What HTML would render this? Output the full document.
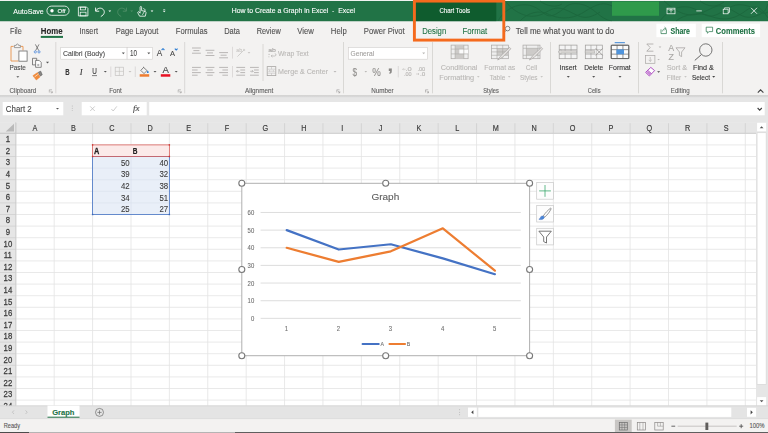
<!DOCTYPE html>
<html lang="en"><head><meta charset="utf-8"><title>How to Create a Graph in Excel - Excel</title>
<style>
html,body{margin:0;padding:0;background:#f3f2f1;}
body{width:768px;height:433px;overflow:hidden;position:relative;font-family:"Liberation Sans",sans-serif;}
svg{display:block;position:absolute;left:-4px;top:-4px;filter:blur(0.35px);font-family:"Liberation Sans",sans-serif;}
text{white-space:pre;}
</style></head><body>
<svg width="776" height="441" viewBox="-4 -4 776 441">
<g id="titlebar">
<rect x="-5.00" y="-5.00" width="778.00" height="6.10" fill="#f0f3f1"/>
<rect x="-5.00" y="1.00" width="778.00" height="20.50" fill="#217346"/>
<g fill="none" stroke="#1a6139" stroke-width="0.9" opacity="0.65">
<path d="M498 21C505 8 520 2 532 6S545 20 556 14S566 2 580 4S600 20 612 21"/>
<path d="M505 1C512 10 524 18 536 16S552 4 566 10S584 22 600 12"/>
<path d="M520 21C528 12 540 10 548 14S570 21 584 12S604 2 612 6"/>
<path d="M660 21C668 10 680 4 692 8S706 20 718 14S734 2 748 6S762 16 768 12"/>
<path d="M664 1C672 8 684 18 698 14S716 2 728 8S744 20 756 16S766 6 768 4"/>
<path d="M676 21C684 14 700 12 710 16S732 21 744 12S760 6 768 18"/>
<path d="M540 1C546 6 556 8 562 4"/>
<path d="M700 1C708 7 716 8 724 2"/>
</g>
<rect x="415.80" y="1.00" width="80.50" height="20.30" fill="#0f5c2e"/>
<rect x="612.00" y="1.50" width="47.00" height="14.30" fill="#2f9a4b"/>
<text x="13.30" y="13.52" font-size="7" fill="#fff" textLength="30.40" lengthAdjust="spacingAndGlyphs" stroke="#fff" stroke-width="0.1">AutoSave</text>
<rect x="46.90" y="6.10" width="22.20" height="9.20" fill="none" stroke="#fff" stroke-width="0.8" rx="4.6"/>
<circle cx="52.00" cy="10.70" r="1.70" fill="#fff"/>
<text x="57.50" y="12.82" font-size="5.6" fill="#fff" textLength="8.00" lengthAdjust="spacingAndGlyphs" stroke="#fff" stroke-width="0.1">Off</text>
<path d="M78.4 7.1h8.2l1.3 1.3v7.5h-9.5z" fill="none" stroke="#fff" stroke-width="0.8" />
<rect x="80.40" y="7.10" width="5.00" height="2.80" fill="none" stroke="#fff" stroke-width="0.7"/>
<rect x="80.20" y="12.20" width="5.80" height="3.70" fill="none" stroke="#fff" stroke-width="0.7"/>
<path d="M95.6 7.6v3.6h3.6M95.8 11c1.2-2.6 4.4-3.6 6.6-2.2s2.6 4.2 0.6 6.2l-2.2 1.6" fill="none" stroke="#fff" stroke-width="0.9" />
<path d="M108.40 10.45h2.8l-1.40 1.5z" fill="#fff" />
<path d="M126.4 7.6v3.6h-3.6M126.2 11c-1.2-2.6-4.4-3.6-6.6-2.2s-2.6 4.2-0.6 6.2l2.2 1.6" fill="none" stroke="#4f8f68" stroke-width="0.9" />
<path d="M130.30 10.45h2.8l-1.40 1.5z" fill="#4f8f68" />
<path d="M139.6 16.2l-1.8-3.4c-.4-.9.8-1.5 1.4-.7l.9 1.1v-6c0-1 1.5-1 1.5 0v3.4l3.3.7c.9.2 1.3.8 1.1 1.7l-.7 3.2z" fill="none" stroke="#fff" stroke-width="0.8" />
<path d="M143.2 8.4l2.2 1.4-3 5" fill="none" stroke="#fff" stroke-width="0.7" />
<path d="M150.60 10.45h2.8l-1.40 1.5z" fill="#fff" />
<line x1="163.20" y1="9.60" x2="165.20" y2="9.60" stroke="#fff" stroke-width="0.6"/>
<path d="M162.80 10.75h2.8l-1.40 1.5z" fill="#fff" />
<text x="231.70" y="13.38" font-size="6.9" fill="#fff" textLength="123.30" lengthAdjust="spacingAndGlyphs" stroke="#fff" stroke-width="0.1">How to Create a Graph in Excel  -  Excel</text>
<text x="439.50" y="12.67" font-size="6.3" fill="#fff" textLength="30.50" lengthAdjust="spacingAndGlyphs" stroke="#fff" stroke-width="0.1">Chart Tools</text>
<rect x="667.00" y="8.20" width="8.00" height="5.60" fill="none" stroke="#fff" stroke-width="0.7"/>
<path d="M671 12.6v-3M669.6 10.8l1.4-1.4 1.4 1.4" fill="none" stroke="#fff" stroke-width="0.7" />
<line x1="667.00" y1="9.60" x2="675.00" y2="9.60" stroke="#fff" stroke-width="0.5"/>
<line x1="696.30" y1="10.90" x2="701.80" y2="10.90" stroke="#fff" stroke-width="0.8"/>
<rect x="723.20" y="9.20" width="4.90" height="4.60" fill="none" stroke="#fff" stroke-width="0.7"/>
<path d="M724.6 9.2v-1.4h4.9v4.6h-1.4" fill="none" stroke="#fff" stroke-width="0.7" />
<path d="M751 7.8l6 6M757 7.8l-6 6" fill="none" stroke="#fff" stroke-width="0.8" />
</g>
<g id="tabs">
<rect x="-5.00" y="21.50" width="778.00" height="19.00" fill="#f3f2f1"/>
<text x="10.00" y="33.89" font-size="8.3" fill="#505050" textLength="11.70" lengthAdjust="spacingAndGlyphs" stroke="#505050" stroke-width="0.1">File</text>
<text x="79.50" y="33.89" font-size="8.3" fill="#505050" textLength="18.50" lengthAdjust="spacingAndGlyphs" stroke="#505050" stroke-width="0.1">Insert</text>
<text x="115.80" y="33.89" font-size="8.3" fill="#505050" textLength="42.50" lengthAdjust="spacingAndGlyphs" stroke="#505050" stroke-width="0.1">Page Layout</text>
<text x="175.80" y="33.89" font-size="8.3" fill="#505050" textLength="31.70" lengthAdjust="spacingAndGlyphs" stroke="#505050" stroke-width="0.1">Formulas</text>
<text x="224.20" y="33.89" font-size="8.3" fill="#505050" textLength="15.80" lengthAdjust="spacingAndGlyphs" stroke="#505050" stroke-width="0.1">Data</text>
<text x="256.70" y="33.89" font-size="8.3" fill="#505050" textLength="24.10" lengthAdjust="spacingAndGlyphs" stroke="#505050" stroke-width="0.1">Review</text>
<text x="297.20" y="33.89" font-size="8.3" fill="#505050" textLength="16.60" lengthAdjust="spacingAndGlyphs" stroke="#505050" stroke-width="0.1">View</text>
<text x="330.80" y="33.89" font-size="8.3" fill="#505050" textLength="15.90" lengthAdjust="spacingAndGlyphs" stroke="#505050" stroke-width="0.1">Help</text>
<text x="363.80" y="33.89" font-size="8.3" fill="#505050" textLength="40.90" lengthAdjust="spacingAndGlyphs" stroke="#505050" stroke-width="0.1">Power Pivot</text>
<text x="40.80" y="33.89" font-size="8.3" fill="#262626" textLength="21.70" lengthAdjust="spacingAndGlyphs" font-weight="bold" stroke="#262626" stroke-width="0.1">Home</text>
<rect x="40.80" y="35.90" width="22.20" height="2.00" fill="#217346"/>
<text x="422.20" y="33.92" font-size="8.4" fill="#217346" textLength="24.00" lengthAdjust="spacingAndGlyphs" stroke="#217346" stroke-width="0.1">Design</text>
<text x="462.50" y="33.92" font-size="8.4" fill="#217346" textLength="24.70" lengthAdjust="spacingAndGlyphs" stroke="#217346" stroke-width="0.1">Format</text>
<circle cx="507.60" cy="28.60" r="2.30" fill="none" stroke="#555" stroke-width="0.7"/>
<line x1="506.00" y1="30.40" x2="504.60" y2="32.00" stroke="#555" stroke-width="0.7"/>
<text x="515.80" y="33.89" font-size="8.3" fill="#484848" textLength="98.40" lengthAdjust="spacingAndGlyphs" stroke="#484848" stroke-width="0.1">Tell me what you want to do</text>
<rect x="656.40" y="23.70" width="39.40" height="13.50" fill="#fff"/>
<path d="M661 29.4v4.2h5.4v-4.2M662.6 31.4c.2-1.8 1.2-2.8 3-2.8M664.6 27.2l1.6 1.4-1.6 1.4" fill="none" stroke="#217346" stroke-width="0.7" />
<text x="670.50" y="33.75" font-size="8.2" fill="#217346" textLength="19.50" lengthAdjust="spacingAndGlyphs" font-weight="bold" stroke="#217346" stroke-width="0.1">Share</text>
<rect x="701.70" y="23.70" width="58.40" height="13.50" fill="#fff"/>
<path d="M706.2 27.2h6.4v4.4h-3.6l-1.6 1.6v-1.6h-1.2z" fill="none" stroke="#217346" stroke-width="0.7" />
<text x="715.80" y="33.75" font-size="8.2" fill="#217346" textLength="39.20" lengthAdjust="spacingAndGlyphs" font-weight="bold" stroke="#217346" stroke-width="0.1">Comments</text>
</g>
<g id="ribbon">
<rect x="-5.00" y="40.30" width="778.00" height="55.00" fill="#f3f2f1"/>
<line x1="55.80" y1="42.00" x2="55.80" y2="93.30" stroke="#d2d0ce" stroke-width="0.8"/>
<line x1="184.70" y1="42.00" x2="184.70" y2="93.30" stroke="#d2d0ce" stroke-width="0.8"/>
<line x1="343.50" y1="42.00" x2="343.50" y2="93.30" stroke="#d2d0ce" stroke-width="0.8"/>
<line x1="432.50" y1="42.00" x2="432.50" y2="93.30" stroke="#d2d0ce" stroke-width="0.8"/>
<line x1="550.50" y1="42.00" x2="550.50" y2="93.30" stroke="#d2d0ce" stroke-width="0.8"/>
<line x1="638.50" y1="42.00" x2="638.50" y2="93.30" stroke="#d2d0ce" stroke-width="0.8"/>
<line x1="722.50" y1="42.00" x2="722.50" y2="93.30" stroke="#d2d0ce" stroke-width="0.8"/>
<path d="M13.6 46.4h-2.6v14.6h7.4" fill="none" stroke="#e8914a" stroke-width="0.9" />
<path d="M20.4 46.4h2.6v4" fill="none" stroke="#e8914a" stroke-width="0.9" />
<path d="M14.4 47.6v-2.2h1.8c0-1.9 2.4-1.9 2.4 0h1.8v2.2z" fill="#f3f2f1" stroke="#7a7a7a" stroke-width="0.7" />
<rect x="18.90" y="51.00" width="8.20" height="10.20" fill="#fff" stroke="#6a6a6a" stroke-width="0.8"/>
<text x="9.50" y="70.48" font-size="6.9" fill="#484848" textLength="16.30" lengthAdjust="spacingAndGlyphs" stroke="#484848" stroke-width="0.1">Paste</text>
<path d="M16.30 76.20h3.0l-1.50 1.6z" fill="#555" />
<path d="M35.4 44.4l3.4 6.2M39 44.4l-3.4 6.2" fill="none" stroke="#555" stroke-width="0.7" />
<circle cx="35.30" cy="51.90" r="1.10" fill="none" stroke="#3b7dd8" stroke-width="0.7"/>
<circle cx="39.00" cy="51.90" r="1.10" fill="none" stroke="#3b7dd8" stroke-width="0.7"/>
<path d="M32.5 58.3h4.2v6.6h-4.2z" fill="#f3f2f1" stroke="#555" stroke-width="0.7" />
<path d="M35.6 60.4h3.6l2 2v4.9h-5.6z" fill="#fff" stroke="#555" stroke-width="0.7" />
<path d="M37.6 64.4h1.4v1.2h-1.4z" fill="none" stroke="#555" stroke-width="0.4" />
<path d="M46.00 61.80h3.0l-1.50 1.6z" fill="#555" />
<path d="M32.9 75.7l4.600-3.100 2.500 4.300-3.700 3.100z" fill="#f08c3c" stroke="#ee7d2a" stroke-width="0.5" />
<path d="M34.600 76.900l3.800-2.800" fill="none" stroke="#fff" stroke-width="0.6" />
<path d="M38.300 72.300l2.400-1.100 1.500 3.600-1.800 1.200z" fill="#8a8886" stroke="#555" stroke-width="0.6" />
<text x="9.50" y="93.38" font-size="6.6" fill="#5c5c5c" textLength="26.70" lengthAdjust="spacingAndGlyphs" stroke="#5c5c5c" stroke-width="0.1">Clipboard</text>
<path d="M49.50 90.00h-0.01M49.30 92.50v-2.7h2.7" fill="none" stroke="#8a8886" stroke-width="0.5" />
<path d="M52.30 92.80h-1.6M52.30 92.80v-1.6M52.30 92.80l-2-2" fill="none" stroke="#8a8886" stroke-width="0.5" />
<rect x="60.70" y="47.40" width="66.40" height="11.80" fill="#fff" stroke="#d0cecc" stroke-width="0.6"/>
<rect x="127.10" y="47.40" width="25.40" height="11.80" fill="#fff" stroke="#d0cecc" stroke-width="0.6"/>
<text x="63.00" y="56.29" font-size="7.6" fill="#484848" textLength="42.00" lengthAdjust="spacingAndGlyphs" stroke="#484848" stroke-width="0.1">Calibri (Body)</text>
<path d="M121.80 52.60h3.0l-1.50 1.6z" fill="#555" />
<text x="130.00" y="56.42" font-size="8.4" fill="#484848" textLength="7.00" lengthAdjust="spacingAndGlyphs" stroke="#484848" stroke-width="0.1">10</text>
<path d="M147.30 52.60h3.0l-1.50 1.6z" fill="#555" />
<text x="156.70" y="56.07" font-size="8.8" fill="#484848" textLength="5.50" lengthAdjust="spacingAndGlyphs" stroke="#484848" stroke-width="0.1">A</text>
<path d="M161.6 50l1.4-1.3 1.4 1.3" fill="none" stroke="#2b7cd3" stroke-width="1.1" />
<text x="170.00" y="56.11" font-size="7.8" fill="#484848" textLength="5.00" lengthAdjust="spacingAndGlyphs" stroke="#484848" stroke-width="0.1">A</text>
<path d="M174.8 48.6l1.4 1.3 1.4-1.3" fill="none" stroke="#2b7cd3" stroke-width="1.1" />
<text x="65.30" y="74.54" font-size="9" fill="#333" textLength="4.40" lengthAdjust="spacingAndGlyphs" font-weight="bold" stroke="#333" stroke-width="0.1">B</text>
<text x="79.80" y="74.54" font-size="9" fill="#333" textLength="2.80" lengthAdjust="spacingAndGlyphs" font-style="italic" font-family="'Liberation Serif',serif" stroke="#333" stroke-width="0.1">I</text>
<text x="92.20" y="73.62" font-size="8.4" fill="#333" textLength="4.60" lengthAdjust="spacingAndGlyphs" stroke="#333" stroke-width="0.1">U</text>
<line x1="92.00" y1="75.60" x2="97.00" y2="75.60" stroke="#333" stroke-width="0.6"/>
<path d="M103.80 71.00h3.0l-1.50 1.6z" fill="#555" />
<line x1="110.80" y1="66.50" x2="110.80" y2="77.00" stroke="#d2d0ce" stroke-width="0.7"/>
<rect x="115.20" y="67.20" width="8.40" height="8.40" fill="none" stroke="#c4c2c0" stroke-width="0.7"/>
<line x1="119.40" y1="67.20" x2="119.40" y2="75.60" stroke="#c4c2c0" stroke-width="0.6"/>
<line x1="115.20" y1="71.40" x2="123.60" y2="71.40" stroke="#c4c2c0" stroke-width="0.6"/>
<path d="M128.50 71.00h3.0l-1.50 1.6z" fill="#c4c2c0" />
<line x1="135.30" y1="66.50" x2="135.30" y2="77.00" stroke="#d2d0ce" stroke-width="0.7"/>
<path d="M143.6 67.4l3.4 3.2-3 3-3.2-3.2z" fill="none" stroke="#555" stroke-width="0.7" />
<path d="M143.2 67l.9.9" fill="none" stroke="#555" stroke-width="0.7" />
<path d="M147.8 70.4c.6.9.9 1.4.9 1.8a.9.9 0 0 1-1.8 0c0-.4.3-.9.9-1.8z" fill="#2b7cd3" />
<rect x="139.70" y="74.20" width="9.50" height="2.50" fill="#ed7d31"/>
<path d="M153.50 71.00h3.0l-1.50 1.6z" fill="#555" />
<text x="162.40" y="72.88" font-size="9.4" fill="#444" textLength="6.40" lengthAdjust="spacingAndGlyphs" stroke="#444" stroke-width="0.1">A</text>
<rect x="160.80" y="74.20" width="9.50" height="2.50" fill="#e81123"/>
<path d="M174.70 71.00h3.0l-1.50 1.6z" fill="#555" />
<text x="109.20" y="93.38" font-size="6.6" fill="#5c5c5c" textLength="12.50" lengthAdjust="spacingAndGlyphs" stroke="#5c5c5c" stroke-width="0.1">Font</text>
<path d="M178.40 90.00h-0.01M178.20 92.50v-2.7h2.7" fill="none" stroke="#8a8886" stroke-width="0.5" />
<path d="M181.20 92.80h-1.6M181.20 92.80v-1.6M181.20 92.80l-2-2" fill="none" stroke="#8a8886" stroke-width="0.5" />
<line x1="192.00" y1="48.00" x2="200.80" y2="48.00" stroke="#a09e9c" stroke-width="0.7"/>
<line x1="193.40" y1="50.60" x2="199.40" y2="50.60" stroke="#a09e9c" stroke-width="0.7"/>
<line x1="192.00" y1="53.20" x2="200.80" y2="53.20" stroke="#a09e9c" stroke-width="0.7"/>
<line x1="205.60" y1="50.30" x2="214.40" y2="50.30" stroke="#a09e9c" stroke-width="0.7"/>
<line x1="207.00" y1="52.90" x2="213.00" y2="52.90" stroke="#a09e9c" stroke-width="0.7"/>
<line x1="205.60" y1="55.50" x2="214.40" y2="55.50" stroke="#a09e9c" stroke-width="0.7"/>
<line x1="219.20" y1="52.60" x2="228.00" y2="52.60" stroke="#a09e9c" stroke-width="0.7"/>
<line x1="220.60" y1="55.20" x2="226.60" y2="55.20" stroke="#a09e9c" stroke-width="0.7"/>
<line x1="219.20" y1="57.80" x2="228.00" y2="57.80" stroke="#a09e9c" stroke-width="0.7"/>
<line x1="192.00" y1="67.40" x2="200.80" y2="67.40" stroke="#a09e9c" stroke-width="0.7"/>
<line x1="192.00" y1="70.00" x2="197.60" y2="70.00" stroke="#a09e9c" stroke-width="0.7"/>
<line x1="192.00" y1="72.60" x2="200.80" y2="72.60" stroke="#a09e9c" stroke-width="0.7"/>
<line x1="192.00" y1="75.20" x2="197.60" y2="75.20" stroke="#a09e9c" stroke-width="0.7"/>
<line x1="205.60" y1="67.40" x2="214.40" y2="67.40" stroke="#a09e9c" stroke-width="0.7"/>
<line x1="207.20" y1="70.00" x2="212.80" y2="70.00" stroke="#a09e9c" stroke-width="0.7"/>
<line x1="205.60" y1="72.60" x2="214.40" y2="72.60" stroke="#a09e9c" stroke-width="0.7"/>
<line x1="207.20" y1="75.20" x2="212.80" y2="75.20" stroke="#a09e9c" stroke-width="0.7"/>
<line x1="219.20" y1="67.40" x2="228.00" y2="67.40" stroke="#a09e9c" stroke-width="0.7"/>
<line x1="222.40" y1="70.00" x2="228.00" y2="70.00" stroke="#a09e9c" stroke-width="0.7"/>
<line x1="219.20" y1="72.60" x2="228.00" y2="72.60" stroke="#a09e9c" stroke-width="0.7"/>
<line x1="222.40" y1="75.20" x2="228.00" y2="75.20" stroke="#a09e9c" stroke-width="0.7"/>
<line x1="232.50" y1="46.80" x2="232.50" y2="58.60" stroke="#d2d0ce" stroke-width="0.7"/>
<line x1="232.50" y1="66.00" x2="232.50" y2="77.40" stroke="#d2d0ce" stroke-width="0.7"/>
<g opacity="0.75">
<path d="M237.4 56.6l6.6-6.6" fill="none" stroke="#b9b7b5" stroke-width="0.8" />
<path d="M243 49.4h1.6v1.6" fill="none" stroke="#b9b7b5" stroke-width="0.7" />
<text x="236.30" y="52.20" font-size="5" fill="#b9b7b5" textLength="5.70" lengthAdjust="spacingAndGlyphs" stroke="#b9b7b5" stroke-width="0.1">ab</text>
</g>
<path d="M247.70 52.20h2.6l-1.30 1.4z" fill="#b9b7b5" />
<line x1="236.30" y1="67.40" x2="245.10" y2="67.40" stroke="#a09e9c" stroke-width="0.7"/>
<line x1="236.30" y1="75.20" x2="245.10" y2="75.20" stroke="#a09e9c" stroke-width="0.7"/>
<line x1="240.30" y1="70.00" x2="245.10" y2="70.00" stroke="#a09e9c" stroke-width="0.7"/>
<line x1="240.30" y1="72.60" x2="245.10" y2="72.60" stroke="#a09e9c" stroke-width="0.7"/>
<path d="M239.50 71.3h-3M237.70 70.1l-1.2 1.2 1.2 1.2" fill="none" stroke="#a09e9c" stroke-width="0.6" />
<line x1="250.00" y1="67.40" x2="258.80" y2="67.40" stroke="#a09e9c" stroke-width="0.7"/>
<line x1="250.00" y1="75.20" x2="258.80" y2="75.20" stroke="#a09e9c" stroke-width="0.7"/>
<line x1="254.00" y1="70.00" x2="258.80" y2="70.00" stroke="#a09e9c" stroke-width="0.7"/>
<line x1="254.00" y1="72.60" x2="258.80" y2="72.60" stroke="#a09e9c" stroke-width="0.7"/>
<path d="M250.20 71.3h3M252.00 70.1l1.2 1.2-1.2 1.2" fill="none" stroke="#a09e9c" stroke-width="0.6" />
<line x1="263.00" y1="44.00" x2="263.00" y2="81.00" stroke="#d2d0ce" stroke-width="0.8"/>
<text x="268.20" y="52.23" font-size="6.2" fill="#a8a6a4" textLength="7.80" lengthAdjust="spacingAndGlyphs" stroke="#a8a6a4" stroke-width="0.1">ab</text>
<path d="M268.4 54.400h1.4M268.4 56.8h1M271.2 56h3.6c1.600 0 1.600-2.400 0-2.400M272.400 54.800l-1.200 1.200 1.200 1.200" fill="none" stroke="#a8a6a4" stroke-width="0.6" />
<text x="278.00" y="56.04" font-size="7.6" fill="#b9b7b5" textLength="30.70" lengthAdjust="spacingAndGlyphs" stroke="#b9b7b5" stroke-width="0.1">Wrap Text</text>
<rect x="267.20" y="66.60" width="8.60" height="9.00" fill="none" stroke="#a8a6a4" stroke-width="0.8"/>
<path d="M267.2 69.2h8.6M267.2 73.2h8.6M271.5 66.6v2.6M271.5 73.2v2.4M268.8 71.2h5.4M269.8 70.2l-1 1 1 1M273.2 70.2l1 1-1 1" fill="none" stroke="#b9b7b5" stroke-width="0.5" />
<text x="278.00" y="73.94" font-size="7.6" fill="#b9b7b5" textLength="50.00" lengthAdjust="spacingAndGlyphs" stroke="#b9b7b5" stroke-width="0.1">Merge &amp; Center</text>
<path d="M333.50 71.00h3.0l-1.50 1.6z" fill="#b9b7b5" />
<text x="245.00" y="93.38" font-size="6.6" fill="#5c5c5c" textLength="28.30" lengthAdjust="spacingAndGlyphs" stroke="#5c5c5c" stroke-width="0.1">Alignment</text>
<path d="M337.00 90.00h-0.01M336.80 92.50v-2.7h2.7" fill="none" stroke="#8a8886" stroke-width="0.5" />
<path d="M339.80 92.80h-1.6M339.80 92.80v-1.6M339.80 92.80l-2-2" fill="none" stroke="#8a8886" stroke-width="0.5" />
<rect x="348.30" y="47.40" width="79.20" height="11.80" fill="#fff" stroke="#d0cecc" stroke-width="0.6"/>
<text x="350.50" y="56.29" font-size="7.6" fill="#a19f9d" textLength="23.70" lengthAdjust="spacingAndGlyphs" stroke="#a19f9d" stroke-width="0.1">General</text>
<path d="M422.20 52.60h3.0l-1.50 1.6z" fill="#b9b7b5" />
<text x="352.60" y="76.16" font-size="11" fill="#8f8d8b" textLength="4.60" lengthAdjust="spacingAndGlyphs" stroke="#8f8d8b" stroke-width="0.1">$</text>
<path d="M364.50 71.10h2.6l-1.30 1.4z" fill="#b9b7b5" />
<text x="372.20" y="75.90" font-size="11.4" fill="#8f8d8b" textLength="8.60" lengthAdjust="spacingAndGlyphs" stroke="#8f8d8b" stroke-width="0.1">%</text>
<text x="387.40" y="70.52" font-size="17" fill="#8a8886" textLength="5.60" lengthAdjust="spacingAndGlyphs" font-weight="bold" stroke="#8a8886" stroke-width="0.1">,</text>
<line x1="398.30" y1="66.00" x2="398.30" y2="77.40" stroke="#d2d0ce" stroke-width="0.7"/>
<text x="405.40" y="71.26" font-size="4.6" fill="#b9b7b5" textLength="6.30" lengthAdjust="spacingAndGlyphs" stroke="#b9b7b5" stroke-width="0.1">.0</text>
<text x="404.00" y="75.86" font-size="4.6" fill="#b9b7b5" textLength="7.70" lengthAdjust="spacingAndGlyphs" stroke="#b9b7b5" stroke-width="0.1">.00</text>
<path d="M402.6 69.3h3M403.6 68.3l-1 1 1 1" fill="none" stroke="#b9b7b5" stroke-width="0.5" />
<text x="417.40" y="71.26" font-size="4.6" fill="#b9b7b5" textLength="7.90" lengthAdjust="spacingAndGlyphs" stroke="#b9b7b5" stroke-width="0.1">.00</text>
<text x="420.00" y="75.86" font-size="4.6" fill="#b9b7b5" textLength="5.30" lengthAdjust="spacingAndGlyphs" stroke="#b9b7b5" stroke-width="0.1">.0</text>
<path d="M416 74h3M418 73l1 1-1 1" fill="none" stroke="#b9b7b5" stroke-width="0.5" />
<text x="371.30" y="93.38" font-size="6.6" fill="#5c5c5c" textLength="22.40" lengthAdjust="spacingAndGlyphs" stroke="#5c5c5c" stroke-width="0.1">Number</text>
<path d="M425.70 90.00h-0.01M425.50 92.50v-2.7h2.7" fill="none" stroke="#8a8886" stroke-width="0.5" />
<path d="M428.50 92.80h-1.6M428.50 92.80v-1.6M428.50 92.80l-2-2" fill="none" stroke="#8a8886" stroke-width="0.5" />
<rect x="451.10" y="45.10" width="17.00" height="13.60" fill="#efefef" stroke="#a9a7a5" stroke-width="0.7"/>
<rect x="455.10" y="45.10" width="8.70" height="4.00" fill="#cdcbc9"/>
<rect x="455.10" y="49.10" width="4.40" height="4.80" fill="#cdcbc9"/>
<rect x="459.50" y="49.10" width="8.60" height="4.80" fill="#fbfbfb"/>
<rect x="455.10" y="53.90" width="8.70" height="4.80" fill="#cdcbc9"/>
<line x1="455.10" y1="45.10" x2="455.10" y2="58.70" stroke="#a9a7a5" stroke-width="0.6"/>
<line x1="463.80" y1="45.10" x2="463.80" y2="58.70" stroke="#a9a7a5" stroke-width="0.6"/>
<line x1="451.10" y1="49.10" x2="468.10" y2="49.10" stroke="#a9a7a5" stroke-width="0.6"/>
<line x1="451.10" y1="53.90" x2="468.10" y2="53.90" stroke="#a9a7a5" stroke-width="0.6"/>
<text x="440.80" y="70.49" font-size="7.6" fill="#b9b7b5" textLength="36.70" lengthAdjust="spacingAndGlyphs" stroke="#b9b7b5" stroke-width="0.1">Conditional</text>
<text x="439.20" y="79.69" font-size="7.6" fill="#b9b7b5" textLength="35.00" lengthAdjust="spacingAndGlyphs" stroke="#b9b7b5" stroke-width="0.1">Formatting</text>
<path d="M477.00 76.20h2.6l-1.30 1.4z" fill="#b9b7b5" />
<rect x="491.40" y="45.10" width="17.00" height="13.60" fill="#efefef" stroke="#a9a7a5" stroke-width="0.7"/>
<rect x="497.00" y="48.50" width="11.40" height="6.80" fill="#cdcbc9"/>
<line x1="497.00" y1="45.10" x2="497.00" y2="58.70" stroke="#a9a7a5" stroke-width="0.6"/>
<line x1="502.70" y1="45.10" x2="502.70" y2="58.70" stroke="#a9a7a5" stroke-width="0.6"/>
<line x1="491.40" y1="48.50" x2="508.40" y2="48.50" stroke="#a9a7a5" stroke-width="0.6"/>
<line x1="491.40" y1="51.90" x2="508.40" y2="51.90" stroke="#a9a7a5" stroke-width="0.6"/>
<line x1="491.40" y1="55.30" x2="508.40" y2="55.30" stroke="#a9a7a5" stroke-width="0.6"/>
<path d="M509.60 47.40l-8.6 8.2-3.4 4.4 4.8-2.6 8.4-8.6z" fill="#e6e4e2" stroke="#a6a4a2" stroke-width="0.7" />
<text x="484.20" y="70.49" font-size="7.6" fill="#b9b7b5" textLength="31.10" lengthAdjust="spacingAndGlyphs" stroke="#b9b7b5" stroke-width="0.1">Format as</text>
<text x="489.70" y="79.69" font-size="7.6" fill="#b9b7b5" textLength="15.60" lengthAdjust="spacingAndGlyphs" stroke="#b9b7b5" stroke-width="0.1">Table</text>
<path d="M507.90 76.20h2.6l-1.30 1.4z" fill="#b9b7b5" />
<rect x="523.00" y="45.10" width="17.00" height="13.60" fill="#efefef" stroke="#a9a7a5" stroke-width="0.7"/>
<rect x="526.40" y="48.30" width="11.60" height="7.00" fill="#cdcbc9"/>
<line x1="526.40" y1="45.10" x2="526.40" y2="58.70" stroke="#a9a7a5" stroke-width="0.6"/>
<line x1="538.00" y1="45.10" x2="538.00" y2="58.70" stroke="#a9a7a5" stroke-width="0.6"/>
<line x1="523.00" y1="48.30" x2="540.00" y2="48.30" stroke="#a9a7a5" stroke-width="0.6"/>
<line x1="523.00" y1="55.30" x2="540.00" y2="55.30" stroke="#a9a7a5" stroke-width="0.6"/>
<path d="M541.40 47.40l-8.6 8.2-3.4 4.4 4.8-2.6 8.4-8.6z" fill="#e6e4e2" stroke="#a6a4a2" stroke-width="0.7" />
<text x="525.80" y="70.49" font-size="7.6" fill="#b9b7b5" textLength="11.40" lengthAdjust="spacingAndGlyphs" stroke="#b9b7b5" stroke-width="0.1">Cell</text>
<text x="520.00" y="79.69" font-size="7.6" fill="#b9b7b5" textLength="17.50" lengthAdjust="spacingAndGlyphs" stroke="#b9b7b5" stroke-width="0.1">Styles</text>
<path d="M540.40 76.20h2.6l-1.30 1.4z" fill="#b9b7b5" />
<text x="483.30" y="93.38" font-size="6.6" fill="#5c5c5c" textLength="15.50" lengthAdjust="spacingAndGlyphs" stroke="#5c5c5c" stroke-width="0.1">Styles</text>
<rect x="559.20" y="45.10" width="17.80" height="13.60" fill="#f4f4f4" stroke="#9c9a98" stroke-width="0.7"/>
<line x1="565.13" y1="45.10" x2="565.13" y2="58.70" stroke="#9c9a98" stroke-width="0.6"/>
<line x1="559.20" y1="49.63" x2="577.00" y2="49.63" stroke="#9c9a98" stroke-width="0.6"/>
<line x1="571.07" y1="45.10" x2="571.07" y2="58.70" stroke="#9c9a98" stroke-width="0.6"/>
<line x1="559.20" y1="54.17" x2="577.00" y2="54.17" stroke="#9c9a98" stroke-width="0.6"/>
<path d="M558.2 51.9l2.8-2.4v1.2h15.6v2.4h-15.6v1.2z" fill="#dddbd9" stroke="#9c9a98" stroke-width="0.5" />
<text x="559.50" y="70.49" font-size="7.6" fill="#333" textLength="17.20" lengthAdjust="spacingAndGlyphs" stroke="#333" stroke-width="0.1">Insert</text>
<path d="M566.80 76.10h3.0l-1.50 1.6z" fill="#555" />
<rect x="585.30" y="45.10" width="17.00" height="13.60" fill="#f4f4f4" stroke="#9c9a98" stroke-width="0.7"/>
<line x1="590.97" y1="45.10" x2="590.97" y2="58.70" stroke="#9c9a98" stroke-width="0.6"/>
<line x1="585.30" y1="49.63" x2="602.30" y2="49.63" stroke="#9c9a98" stroke-width="0.6"/>
<line x1="596.63" y1="45.10" x2="596.63" y2="58.70" stroke="#9c9a98" stroke-width="0.6"/>
<line x1="585.30" y1="54.17" x2="602.30" y2="54.17" stroke="#9c9a98" stroke-width="0.6"/>
<path d="M585.3 50.7h9.4v2.400h-9.4z" fill="#dddbd9" stroke="#9c9a98" stroke-width="0.5" />
<path d="M595.6 48.400l7 7M602.6 48.400l-7 7" fill="none" stroke="#9c9a98" stroke-width="0.7" />
<rect x="596.40" y="49.60" width="6.40" height="4.60" fill="#f3f2f1" opacity="0.55"/>
<path d="M596 48.800l6.400 6.300M602.400 48.800l-6.400 6.300" fill="none" stroke="#9c9a98" stroke-width="0.7" />
<text x="584.20" y="70.49" font-size="7.6" fill="#333" textLength="19.10" lengthAdjust="spacingAndGlyphs" stroke="#333" stroke-width="0.1">Delete</text>
<path d="M592.20 76.10h3.0l-1.50 1.6z" fill="#555" />
<rect x="611.20" y="45.20" width="17.60" height="13.40" fill="#fbfbfb" stroke="#666" stroke-width="0.7999999999999999"/>
<line x1="617.07" y1="45.20" x2="617.07" y2="58.60" stroke="#666" stroke-width="0.7"/>
<line x1="611.20" y1="49.67" x2="628.80" y2="49.67" stroke="#666" stroke-width="0.7"/>
<line x1="622.93" y1="45.20" x2="622.93" y2="58.60" stroke="#666" stroke-width="0.7"/>
<line x1="611.20" y1="54.13" x2="628.80" y2="54.13" stroke="#666" stroke-width="0.7"/>
<rect x="611.20" y="45.20" width="17.60" height="13.40" fill="none" stroke="#5a5a5a" stroke-width="0.8" rx="1.2"/>
<rect x="616.40" y="49.40" width="7.60" height="4.90" fill="#4f94dc"/>
<line x1="614.70" y1="42.70" x2="624.90" y2="42.70" stroke="#3b86d6" stroke-width="1"/>
<text x="608.80" y="70.49" font-size="7.6" fill="#333" textLength="22.00" lengthAdjust="spacingAndGlyphs" stroke="#333" stroke-width="0.1">Format</text>
<path d="M618.50 76.10h3.0l-1.50 1.6z" fill="#555" />
<text x="587.80" y="93.38" font-size="6.6" fill="#5c5c5c" textLength="12.70" lengthAdjust="spacingAndGlyphs" stroke="#5c5c5c" stroke-width="0.1">Cells</text>
<path d="M653.4 44h-6.6l3.4 3.6-3.4 3.6h6.6" fill="none" stroke="#a8a6a4" stroke-width="0.8" />
<path d="M658.70 46.50h2.6l-1.30 1.4z" fill="#b9b7b5" />
<rect x="645.50" y="55.50" width="9.40" height="7.80" fill="none" stroke="#a8a6a4" stroke-width="0.7"/>
<path d="M650.2 57v4.4M648.6 59.8l1.6 1.6 1.6-1.6" fill="none" stroke="#a8a6a4" stroke-width="0.6" />
<path d="M657.30 58.90h2.6l-1.30 1.4z" fill="#b9b7b5" />
<path d="M645.6 72.400l5.200-5 3.800 3.200-5.200 5.400z" fill="#fff" stroke="#a73fbd" stroke-width="0.9" />
<path d="M647.800 70.400l3.900 3.300" fill="none" stroke="#a73fbd" stroke-width="0.8" />
<path d="M646.200 72.400l1.900-1.700 3.300 2.900-1.800 1.800z" fill="#c98ad6" />
<path d="M657.10 71.20h3.0l-1.50 1.6z" fill="#444" />
<text x="668.30" y="50.96" font-size="9.6" fill="#a8a6a4" textLength="5.90" lengthAdjust="spacingAndGlyphs" stroke="#a8a6a4" stroke-width="0.1">A</text>
<text x="668.60" y="59.56" font-size="9.6" fill="#a8a6a4" textLength="5.40" lengthAdjust="spacingAndGlyphs" stroke="#a8a6a4" stroke-width="0.1">Z</text>
<path d="M676 47.8h9l-3.4 4.2v4.6l-2.2-1.2v-3.4z" fill="none" stroke="#a8a6a4" stroke-width="0.8" />
<text x="666.70" y="70.49" font-size="7.6" fill="#b9b7b5" textLength="20.50" lengthAdjust="spacingAndGlyphs" stroke="#b9b7b5" stroke-width="0.1">Sort &amp;</text>
<text x="666.70" y="79.69" font-size="7.6" fill="#b9b7b5" textLength="14.60" lengthAdjust="spacingAndGlyphs" stroke="#b9b7b5" stroke-width="0.1">Filter</text>
<path d="M684.20 76.20h2.6l-1.30 1.4z" fill="#b9b7b5" />
<circle cx="705.80" cy="50.00" r="6.20" fill="none" stroke="#555" stroke-width="0.8"/>
<line x1="701.40" y1="54.60" x2="694.80" y2="60.40" stroke="#555" stroke-width="0.9"/>
<text x="693.00" y="70.49" font-size="7.6" fill="#333" textLength="20.80" lengthAdjust="spacingAndGlyphs" stroke="#333" stroke-width="0.1">Find &amp;</text>
<text x="692.00" y="79.69" font-size="7.6" fill="#333" textLength="18.00" lengthAdjust="spacingAndGlyphs" stroke="#333" stroke-width="0.1">Select</text>
<path d="M712.20 76.10h3.0l-1.50 1.6z" fill="#444" />
<text x="670.80" y="93.38" font-size="6.6" fill="#5c5c5c" textLength="18.90" lengthAdjust="spacingAndGlyphs" stroke="#5c5c5c" stroke-width="0.1">Editing</text>
<path d="M757.8 92.6l2.800-2.800 2.800 2.800" fill="none" stroke="#444" stroke-width="1.1" />
</g>
<rect x="414.40" y="1.1" width="89.4" height="39.0" fill="none" stroke="#f56a1d" stroke-width="2.9"/>
<g id="formulabar">
<defs><linearGradient id="sh" x1="0" y1="0" x2="0" y2="1"><stop offset="0" stop-color="#c9c9c9"/><stop offset="1" stop-color="#e6e6e6"/></linearGradient></defs>
<rect x="-5.00" y="97.00" width="778.00" height="25.20" fill="#e6e6e6"/>
<rect x="-5.00" y="95.20" width="778.00" height="2.60" fill="url(#sh)"/>
<rect x="2.70" y="102.00" width="60.60" height="13.30" fill="#fff"/>
<text x="5.80" y="112.07" font-size="8.8" fill="#484848" textLength="25.90" lengthAdjust="spacingAndGlyphs" stroke="#484848" stroke-width="0.1">Chart 2</text>
<path d="M56.00 108.00h3.0l-1.50 1.6z" fill="#555" />
<circle cx="72.20" cy="106.00" r="0.45" fill="#9a9a9a"/>
<circle cx="72.20" cy="108.30" r="0.45" fill="#9a9a9a"/>
<circle cx="72.20" cy="110.60" r="0.45" fill="#9a9a9a"/>
<rect x="81.70" y="102.00" width="65.00" height="13.30" fill="#fff"/>
<path d="M90.2 106.4l4.6 4.6M94.8 106.4l-4.6 4.6" fill="none" stroke="#b8b8b8" stroke-width="0.7" />
<path d="M111.4 109l1.8 2 3.6-4.6" fill="none" stroke="#b8b8b8" stroke-width="0.7" />
<text x="133.00" y="111.48" font-size="8" fill="#444" textLength="6.60" lengthAdjust="spacingAndGlyphs" font-style="italic" font-family="'Liberation Serif',serif" stroke="#444" stroke-width="0.1">fx</text>
<rect x="149.20" y="102.00" width="615.50" height="13.30" fill="#fff"/>
<path d="M757.6 108l2.1 2.1 2.1-2.1" fill="none" stroke="#444" stroke-width="1.15" />
</g>
<g id="grid">
<rect x="-5.00" y="122.20" width="778.00" height="283.60" fill="#e6e6e6"/>
<rect x="15.80" y="133.30" width="740.20" height="272.50" fill="#fff"/>
<path d="M14 123.8v7.8h-8.2z" fill="#b9b9b9" />
<line x1="15.80" y1="133.30" x2="15.80" y2="405.80" stroke="#e3e3e3" stroke-width="0.8"/>
<line x1="15.80" y1="123.20" x2="15.80" y2="133.30" stroke="#cfcfcf" stroke-width="0.8"/>
<line x1="54.20" y1="133.30" x2="54.20" y2="405.80" stroke="#e3e3e3" stroke-width="0.8"/>
<line x1="54.20" y1="123.20" x2="54.20" y2="133.30" stroke="#cfcfcf" stroke-width="0.8"/>
<line x1="92.59" y1="133.30" x2="92.59" y2="405.80" stroke="#e3e3e3" stroke-width="0.8"/>
<line x1="92.59" y1="123.20" x2="92.59" y2="133.30" stroke="#cfcfcf" stroke-width="0.8"/>
<line x1="130.99" y1="133.30" x2="130.99" y2="405.80" stroke="#e3e3e3" stroke-width="0.8"/>
<line x1="130.99" y1="123.20" x2="130.99" y2="133.30" stroke="#cfcfcf" stroke-width="0.8"/>
<line x1="169.38" y1="133.30" x2="169.38" y2="405.80" stroke="#e3e3e3" stroke-width="0.8"/>
<line x1="169.38" y1="123.20" x2="169.38" y2="133.30" stroke="#cfcfcf" stroke-width="0.8"/>
<line x1="207.78" y1="133.30" x2="207.78" y2="405.80" stroke="#e3e3e3" stroke-width="0.8"/>
<line x1="207.78" y1="123.20" x2="207.78" y2="133.30" stroke="#cfcfcf" stroke-width="0.8"/>
<line x1="246.17" y1="133.30" x2="246.17" y2="405.80" stroke="#e3e3e3" stroke-width="0.8"/>
<line x1="246.17" y1="123.20" x2="246.17" y2="133.30" stroke="#cfcfcf" stroke-width="0.8"/>
<line x1="284.57" y1="133.30" x2="284.57" y2="405.80" stroke="#e3e3e3" stroke-width="0.8"/>
<line x1="284.57" y1="123.20" x2="284.57" y2="133.30" stroke="#cfcfcf" stroke-width="0.8"/>
<line x1="322.96" y1="133.30" x2="322.96" y2="405.80" stroke="#e3e3e3" stroke-width="0.8"/>
<line x1="322.96" y1="123.20" x2="322.96" y2="133.30" stroke="#cfcfcf" stroke-width="0.8"/>
<line x1="361.36" y1="133.30" x2="361.36" y2="405.80" stroke="#e3e3e3" stroke-width="0.8"/>
<line x1="361.36" y1="123.20" x2="361.36" y2="133.30" stroke="#cfcfcf" stroke-width="0.8"/>
<line x1="399.75" y1="133.30" x2="399.75" y2="405.80" stroke="#e3e3e3" stroke-width="0.8"/>
<line x1="399.75" y1="123.20" x2="399.75" y2="133.30" stroke="#cfcfcf" stroke-width="0.8"/>
<line x1="438.15" y1="133.30" x2="438.15" y2="405.80" stroke="#e3e3e3" stroke-width="0.8"/>
<line x1="438.15" y1="123.20" x2="438.15" y2="133.30" stroke="#cfcfcf" stroke-width="0.8"/>
<line x1="476.54" y1="133.30" x2="476.54" y2="405.80" stroke="#e3e3e3" stroke-width="0.8"/>
<line x1="476.54" y1="123.20" x2="476.54" y2="133.30" stroke="#cfcfcf" stroke-width="0.8"/>
<line x1="514.94" y1="133.30" x2="514.94" y2="405.80" stroke="#e3e3e3" stroke-width="0.8"/>
<line x1="514.94" y1="123.20" x2="514.94" y2="133.30" stroke="#cfcfcf" stroke-width="0.8"/>
<line x1="553.33" y1="133.30" x2="553.33" y2="405.80" stroke="#e3e3e3" stroke-width="0.8"/>
<line x1="553.33" y1="123.20" x2="553.33" y2="133.30" stroke="#cfcfcf" stroke-width="0.8"/>
<line x1="591.73" y1="133.30" x2="591.73" y2="405.80" stroke="#e3e3e3" stroke-width="0.8"/>
<line x1="591.73" y1="123.20" x2="591.73" y2="133.30" stroke="#cfcfcf" stroke-width="0.8"/>
<line x1="630.12" y1="133.30" x2="630.12" y2="405.80" stroke="#e3e3e3" stroke-width="0.8"/>
<line x1="630.12" y1="123.20" x2="630.12" y2="133.30" stroke="#cfcfcf" stroke-width="0.8"/>
<line x1="668.51" y1="133.30" x2="668.51" y2="405.80" stroke="#e3e3e3" stroke-width="0.8"/>
<line x1="668.51" y1="123.20" x2="668.51" y2="133.30" stroke="#cfcfcf" stroke-width="0.8"/>
<line x1="706.91" y1="133.30" x2="706.91" y2="405.80" stroke="#e3e3e3" stroke-width="0.8"/>
<line x1="706.91" y1="123.20" x2="706.91" y2="133.30" stroke="#cfcfcf" stroke-width="0.8"/>
<line x1="745.31" y1="133.30" x2="745.31" y2="405.80" stroke="#e3e3e3" stroke-width="0.8"/>
<line x1="745.31" y1="123.20" x2="745.31" y2="133.30" stroke="#cfcfcf" stroke-width="0.8"/>
<line x1="15.80" y1="133.30" x2="756.00" y2="133.30" stroke="#e3e3e3" stroke-width="0.8"/>
<line x1="0.00" y1="133.30" x2="15.80" y2="133.30" stroke="#cfcfcf" stroke-width="0.8"/>
<line x1="15.80" y1="144.90" x2="756.00" y2="144.90" stroke="#e3e3e3" stroke-width="0.8"/>
<line x1="0.00" y1="144.90" x2="15.80" y2="144.90" stroke="#cfcfcf" stroke-width="0.8"/>
<line x1="15.80" y1="156.50" x2="756.00" y2="156.50" stroke="#e3e3e3" stroke-width="0.8"/>
<line x1="0.00" y1="156.50" x2="15.80" y2="156.50" stroke="#cfcfcf" stroke-width="0.8"/>
<line x1="15.80" y1="168.10" x2="756.00" y2="168.10" stroke="#e3e3e3" stroke-width="0.8"/>
<line x1="0.00" y1="168.10" x2="15.80" y2="168.10" stroke="#cfcfcf" stroke-width="0.8"/>
<line x1="15.80" y1="179.70" x2="756.00" y2="179.70" stroke="#e3e3e3" stroke-width="0.8"/>
<line x1="0.00" y1="179.70" x2="15.80" y2="179.70" stroke="#cfcfcf" stroke-width="0.8"/>
<line x1="15.80" y1="191.30" x2="756.00" y2="191.30" stroke="#e3e3e3" stroke-width="0.8"/>
<line x1="0.00" y1="191.30" x2="15.80" y2="191.30" stroke="#cfcfcf" stroke-width="0.8"/>
<line x1="15.80" y1="202.90" x2="756.00" y2="202.90" stroke="#e3e3e3" stroke-width="0.8"/>
<line x1="0.00" y1="202.90" x2="15.80" y2="202.90" stroke="#cfcfcf" stroke-width="0.8"/>
<line x1="15.80" y1="214.50" x2="756.00" y2="214.50" stroke="#e3e3e3" stroke-width="0.8"/>
<line x1="0.00" y1="214.50" x2="15.80" y2="214.50" stroke="#cfcfcf" stroke-width="0.8"/>
<line x1="15.80" y1="226.10" x2="756.00" y2="226.10" stroke="#e3e3e3" stroke-width="0.8"/>
<line x1="0.00" y1="226.10" x2="15.80" y2="226.10" stroke="#cfcfcf" stroke-width="0.8"/>
<line x1="15.80" y1="237.70" x2="756.00" y2="237.70" stroke="#e3e3e3" stroke-width="0.8"/>
<line x1="0.00" y1="237.70" x2="15.80" y2="237.70" stroke="#cfcfcf" stroke-width="0.8"/>
<line x1="15.80" y1="249.30" x2="756.00" y2="249.30" stroke="#e3e3e3" stroke-width="0.8"/>
<line x1="0.00" y1="249.30" x2="15.80" y2="249.30" stroke="#cfcfcf" stroke-width="0.8"/>
<line x1="15.80" y1="260.90" x2="756.00" y2="260.90" stroke="#e3e3e3" stroke-width="0.8"/>
<line x1="0.00" y1="260.90" x2="15.80" y2="260.90" stroke="#cfcfcf" stroke-width="0.8"/>
<line x1="15.80" y1="272.50" x2="756.00" y2="272.50" stroke="#e3e3e3" stroke-width="0.8"/>
<line x1="0.00" y1="272.50" x2="15.80" y2="272.50" stroke="#cfcfcf" stroke-width="0.8"/>
<line x1="15.80" y1="284.10" x2="756.00" y2="284.10" stroke="#e3e3e3" stroke-width="0.8"/>
<line x1="0.00" y1="284.10" x2="15.80" y2="284.10" stroke="#cfcfcf" stroke-width="0.8"/>
<line x1="15.80" y1="295.70" x2="756.00" y2="295.70" stroke="#e3e3e3" stroke-width="0.8"/>
<line x1="0.00" y1="295.70" x2="15.80" y2="295.70" stroke="#cfcfcf" stroke-width="0.8"/>
<line x1="15.80" y1="307.30" x2="756.00" y2="307.30" stroke="#e3e3e3" stroke-width="0.8"/>
<line x1="0.00" y1="307.30" x2="15.80" y2="307.30" stroke="#cfcfcf" stroke-width="0.8"/>
<line x1="15.80" y1="318.90" x2="756.00" y2="318.90" stroke="#e3e3e3" stroke-width="0.8"/>
<line x1="0.00" y1="318.90" x2="15.80" y2="318.90" stroke="#cfcfcf" stroke-width="0.8"/>
<line x1="15.80" y1="330.50" x2="756.00" y2="330.50" stroke="#e3e3e3" stroke-width="0.8"/>
<line x1="0.00" y1="330.50" x2="15.80" y2="330.50" stroke="#cfcfcf" stroke-width="0.8"/>
<line x1="15.80" y1="342.10" x2="756.00" y2="342.10" stroke="#e3e3e3" stroke-width="0.8"/>
<line x1="0.00" y1="342.10" x2="15.80" y2="342.10" stroke="#cfcfcf" stroke-width="0.8"/>
<line x1="15.80" y1="353.70" x2="756.00" y2="353.70" stroke="#e3e3e3" stroke-width="0.8"/>
<line x1="0.00" y1="353.70" x2="15.80" y2="353.70" stroke="#cfcfcf" stroke-width="0.8"/>
<line x1="15.80" y1="365.30" x2="756.00" y2="365.30" stroke="#e3e3e3" stroke-width="0.8"/>
<line x1="0.00" y1="365.30" x2="15.80" y2="365.30" stroke="#cfcfcf" stroke-width="0.8"/>
<line x1="15.80" y1="376.90" x2="756.00" y2="376.90" stroke="#e3e3e3" stroke-width="0.8"/>
<line x1="0.00" y1="376.90" x2="15.80" y2="376.90" stroke="#cfcfcf" stroke-width="0.8"/>
<line x1="15.80" y1="388.50" x2="756.00" y2="388.50" stroke="#e3e3e3" stroke-width="0.8"/>
<line x1="0.00" y1="388.50" x2="15.80" y2="388.50" stroke="#cfcfcf" stroke-width="0.8"/>
<line x1="15.80" y1="400.10" x2="756.00" y2="400.10" stroke="#e3e3e3" stroke-width="0.8"/>
<line x1="0.00" y1="400.10" x2="15.80" y2="400.10" stroke="#cfcfcf" stroke-width="0.8"/>
<line x1="15.80" y1="122.20" x2="15.80" y2="405.80" stroke="#c6c6c6" stroke-width="0.8"/>
<line x1="0.00" y1="133.30" x2="756.00" y2="133.30" stroke="#c6c6c6" stroke-width="0.8"/>
<text transform="translate(35.00 131.21) scale(0.76 1)" font-size="9.6" fill="#3c3c3c" text-anchor="middle" stroke="#3c3c3c" stroke-width="0.2">A</text>
<text transform="translate(73.39 131.21) scale(0.76 1)" font-size="9.6" fill="#3c3c3c" text-anchor="middle" stroke="#3c3c3c" stroke-width="0.2">B</text>
<text transform="translate(111.79 131.21) scale(0.76 1)" font-size="9.6" fill="#3c3c3c" text-anchor="middle" stroke="#3c3c3c" stroke-width="0.2">C</text>
<text transform="translate(150.18 131.21) scale(0.76 1)" font-size="9.6" fill="#3c3c3c" text-anchor="middle" stroke="#3c3c3c" stroke-width="0.2">D</text>
<text transform="translate(188.58 131.21) scale(0.76 1)" font-size="9.6" fill="#3c3c3c" text-anchor="middle" stroke="#3c3c3c" stroke-width="0.2">E</text>
<text transform="translate(226.97 131.21) scale(0.76 1)" font-size="9.6" fill="#3c3c3c" text-anchor="middle" stroke="#3c3c3c" stroke-width="0.2">F</text>
<text transform="translate(265.37 131.21) scale(0.76 1)" font-size="9.6" fill="#3c3c3c" text-anchor="middle" stroke="#3c3c3c" stroke-width="0.2">G</text>
<text transform="translate(303.76 131.21) scale(0.76 1)" font-size="9.6" fill="#3c3c3c" text-anchor="middle" stroke="#3c3c3c" stroke-width="0.2">H</text>
<text transform="translate(342.16 131.21) scale(0.76 1)" font-size="9.6" fill="#3c3c3c" text-anchor="middle" stroke="#3c3c3c" stroke-width="0.2">I</text>
<text transform="translate(380.55 131.21) scale(0.76 1)" font-size="9.6" fill="#3c3c3c" text-anchor="middle" stroke="#3c3c3c" stroke-width="0.2">J</text>
<text transform="translate(418.95 131.21) scale(0.76 1)" font-size="9.6" fill="#3c3c3c" text-anchor="middle" stroke="#3c3c3c" stroke-width="0.2">K</text>
<text transform="translate(457.34 131.21) scale(0.76 1)" font-size="9.6" fill="#3c3c3c" text-anchor="middle" stroke="#3c3c3c" stroke-width="0.2">L</text>
<text transform="translate(495.74 131.21) scale(0.76 1)" font-size="9.6" fill="#3c3c3c" text-anchor="middle" stroke="#3c3c3c" stroke-width="0.2">M</text>
<text transform="translate(534.13 131.21) scale(0.76 1)" font-size="9.6" fill="#3c3c3c" text-anchor="middle" stroke="#3c3c3c" stroke-width="0.2">N</text>
<text transform="translate(572.53 131.21) scale(0.76 1)" font-size="9.6" fill="#3c3c3c" text-anchor="middle" stroke="#3c3c3c" stroke-width="0.2">O</text>
<text transform="translate(610.92 131.21) scale(0.76 1)" font-size="9.6" fill="#3c3c3c" text-anchor="middle" stroke="#3c3c3c" stroke-width="0.2">P</text>
<text transform="translate(649.32 131.21) scale(0.76 1)" font-size="9.6" fill="#3c3c3c" text-anchor="middle" stroke="#3c3c3c" stroke-width="0.2">Q</text>
<text transform="translate(687.71 131.21) scale(0.76 1)" font-size="9.6" fill="#3c3c3c" text-anchor="middle" stroke="#3c3c3c" stroke-width="0.2">R</text>
<text transform="translate(726.11 131.21) scale(0.76 1)" font-size="9.6" fill="#3c3c3c" text-anchor="middle" stroke="#3c3c3c" stroke-width="0.2">S</text>
<clipPath id="gc"><rect x="0" y="133.3" width="15.8" height="272.50"/></clipPath><g clip-path="url(#gc)">
<text transform="translate(7.90 142.15) scale(0.84 1)" font-size="9.3" fill="#3c3c3c" text-anchor="middle" stroke="#3c3c3c" stroke-width="0.25">1</text>
<text transform="translate(7.90 153.75) scale(0.84 1)" font-size="9.3" fill="#3c3c3c" text-anchor="middle" stroke="#3c3c3c" stroke-width="0.25">2</text>
<text transform="translate(7.90 165.35) scale(0.84 1)" font-size="9.3" fill="#3c3c3c" text-anchor="middle" stroke="#3c3c3c" stroke-width="0.25">3</text>
<text transform="translate(7.90 176.95) scale(0.84 1)" font-size="9.3" fill="#3c3c3c" text-anchor="middle" stroke="#3c3c3c" stroke-width="0.25">4</text>
<text transform="translate(7.90 188.55) scale(0.84 1)" font-size="9.3" fill="#3c3c3c" text-anchor="middle" stroke="#3c3c3c" stroke-width="0.25">5</text>
<text transform="translate(7.90 200.15) scale(0.84 1)" font-size="9.3" fill="#3c3c3c" text-anchor="middle" stroke="#3c3c3c" stroke-width="0.25">6</text>
<text transform="translate(7.90 211.75) scale(0.84 1)" font-size="9.3" fill="#3c3c3c" text-anchor="middle" stroke="#3c3c3c" stroke-width="0.25">7</text>
<text transform="translate(7.90 223.35) scale(0.84 1)" font-size="9.3" fill="#3c3c3c" text-anchor="middle" stroke="#3c3c3c" stroke-width="0.25">8</text>
<text transform="translate(7.90 234.95) scale(0.84 1)" font-size="9.3" fill="#3c3c3c" text-anchor="middle" stroke="#3c3c3c" stroke-width="0.25">9</text>
<text transform="translate(7.90 246.55) scale(0.84 1)" font-size="9.3" fill="#3c3c3c" text-anchor="middle" stroke="#3c3c3c" stroke-width="0.25">10</text>
<text transform="translate(7.90 258.15) scale(0.84 1)" font-size="9.3" fill="#3c3c3c" text-anchor="middle" stroke="#3c3c3c" stroke-width="0.25">11</text>
<text transform="translate(7.90 269.75) scale(0.84 1)" font-size="9.3" fill="#3c3c3c" text-anchor="middle" stroke="#3c3c3c" stroke-width="0.25">12</text>
<text transform="translate(7.90 281.35) scale(0.84 1)" font-size="9.3" fill="#3c3c3c" text-anchor="middle" stroke="#3c3c3c" stroke-width="0.25">13</text>
<text transform="translate(7.90 292.95) scale(0.84 1)" font-size="9.3" fill="#3c3c3c" text-anchor="middle" stroke="#3c3c3c" stroke-width="0.25">14</text>
<text transform="translate(7.90 304.55) scale(0.84 1)" font-size="9.3" fill="#3c3c3c" text-anchor="middle" stroke="#3c3c3c" stroke-width="0.25">15</text>
<text transform="translate(7.90 316.15) scale(0.84 1)" font-size="9.3" fill="#3c3c3c" text-anchor="middle" stroke="#3c3c3c" stroke-width="0.25">16</text>
<text transform="translate(7.90 327.75) scale(0.84 1)" font-size="9.3" fill="#3c3c3c" text-anchor="middle" stroke="#3c3c3c" stroke-width="0.25">17</text>
<text transform="translate(7.90 339.35) scale(0.84 1)" font-size="9.3" fill="#3c3c3c" text-anchor="middle" stroke="#3c3c3c" stroke-width="0.25">18</text>
<text transform="translate(7.90 350.95) scale(0.84 1)" font-size="9.3" fill="#3c3c3c" text-anchor="middle" stroke="#3c3c3c" stroke-width="0.25">19</text>
<text transform="translate(7.90 362.55) scale(0.84 1)" font-size="9.3" fill="#3c3c3c" text-anchor="middle" stroke="#3c3c3c" stroke-width="0.25">20</text>
<text transform="translate(7.90 374.15) scale(0.84 1)" font-size="9.3" fill="#3c3c3c" text-anchor="middle" stroke="#3c3c3c" stroke-width="0.25">21</text>
<text transform="translate(7.90 385.75) scale(0.84 1)" font-size="9.3" fill="#3c3c3c" text-anchor="middle" stroke="#3c3c3c" stroke-width="0.25">22</text>
<text transform="translate(7.90 397.35) scale(0.84 1)" font-size="9.3" fill="#3c3c3c" text-anchor="middle" stroke="#3c3c3c" stroke-width="0.25">23</text>
<text transform="translate(7.90 408.95) scale(0.84 1)" font-size="9.3" fill="#3c3c3c" text-anchor="middle" stroke="#3c3c3c" stroke-width="0.25">24</text>
</g>
<rect x="92.59" y="144.90" width="76.79" height="11.60" fill="#fbeae9"/>
<rect x="92.59" y="156.50" width="76.79" height="58.00" fill="#e9eff8"/>
<line x1="92.59" y1="168.10" x2="169.38" y2="168.10" stroke="#d8dfec" stroke-width="0.6"/>
<line x1="92.59" y1="179.70" x2="169.38" y2="179.70" stroke="#d8dfec" stroke-width="0.6"/>
<line x1="92.59" y1="191.30" x2="169.38" y2="191.30" stroke="#d8dfec" stroke-width="0.6"/>
<line x1="92.59" y1="202.90" x2="169.38" y2="202.90" stroke="#d8dfec" stroke-width="0.6"/>
<line x1="130.99" y1="156.50" x2="130.99" y2="214.50" stroke="#d8dfec" stroke-width="0.6"/>
<rect x="92.59" y="156.50" width="76.79" height="58.00" fill="none" stroke="#4472c4" stroke-width="0.8"/>
<rect x="92.59" y="144.90" width="76.79" height="11.60" fill="none" stroke="#d9605c" stroke-width="0.8"/>
<rect x="91.89" y="144.20" width="1.40" height="1.40" fill="#c9302c"/>
<rect x="168.68" y="144.20" width="1.40" height="1.40" fill="#c9302c"/>
<rect x="91.89" y="155.80" width="1.40" height="1.40" fill="#c9302c"/>
<rect x="168.68" y="155.80" width="1.40" height="1.40" fill="#c9302c"/>
<rect x="91.89" y="213.80" width="1.40" height="1.40" fill="#3a66b7"/>
<rect x="168.68" y="213.80" width="1.40" height="1.40" fill="#3a66b7"/>
<text transform="translate(93.90 154.44) scale(0.82 1)" font-size="9" fill="#222" text-anchor="start" font-weight="bold" stroke="#222" stroke-width="0.25">A</text>
<text transform="translate(132.70 154.44) scale(0.72 1)" font-size="9" fill="#222" text-anchor="start" font-weight="bold" stroke="#222" stroke-width="0.25">B</text>
<text x="121.00" y="165.83" font-size="9.4" fill="#3a3a3a" textLength="8.70" lengthAdjust="spacingAndGlyphs" stroke="#3a3a3a" stroke-width="0.1">50</text>
<text x="159.40" y="165.83" font-size="9.4" fill="#3a3a3a" textLength="8.70" lengthAdjust="spacingAndGlyphs" stroke="#3a3a3a" stroke-width="0.1">40</text>
<text x="121.00" y="177.43" font-size="9.4" fill="#3a3a3a" textLength="8.70" lengthAdjust="spacingAndGlyphs" stroke="#3a3a3a" stroke-width="0.1">39</text>
<text x="159.40" y="177.43" font-size="9.4" fill="#3a3a3a" textLength="8.70" lengthAdjust="spacingAndGlyphs" stroke="#3a3a3a" stroke-width="0.1">32</text>
<text x="121.00" y="189.03" font-size="9.4" fill="#3a3a3a" textLength="8.70" lengthAdjust="spacingAndGlyphs" stroke="#3a3a3a" stroke-width="0.1">42</text>
<text x="159.40" y="189.03" font-size="9.4" fill="#3a3a3a" textLength="8.70" lengthAdjust="spacingAndGlyphs" stroke="#3a3a3a" stroke-width="0.1">38</text>
<text x="121.00" y="200.63" font-size="9.4" fill="#3a3a3a" textLength="8.70" lengthAdjust="spacingAndGlyphs" stroke="#3a3a3a" stroke-width="0.1">34</text>
<text x="159.40" y="200.63" font-size="9.4" fill="#3a3a3a" textLength="8.70" lengthAdjust="spacingAndGlyphs" stroke="#3a3a3a" stroke-width="0.1">51</text>
<text x="121.00" y="212.23" font-size="9.4" fill="#3a3a3a" textLength="8.70" lengthAdjust="spacingAndGlyphs" stroke="#3a3a3a" stroke-width="0.1">25</text>
<text x="159.40" y="212.23" font-size="9.4" fill="#3a3a3a" textLength="8.70" lengthAdjust="spacingAndGlyphs" stroke="#3a3a3a" stroke-width="0.1">27</text>
</g>
<g id="chart">
<rect x="241.80" y="183.30" width="287.80" height="172.40" fill="#fff" stroke="#b0b0b0" stroke-width="1"/>
<line x1="260.60" y1="318.35" x2="520.80" y2="318.35" stroke="#d4d4d4" stroke-width="0.8"/>
<text transform="translate(254.20 320.83) scale(0.9 1)" font-size="6.6" fill="#707070" text-anchor="end" stroke="#707070" stroke-width="0.1">0</text>
<line x1="260.60" y1="300.71" x2="520.80" y2="300.71" stroke="#d4d4d4" stroke-width="0.8"/>
<text transform="translate(254.20 303.18) scale(0.9 1)" font-size="6.6" fill="#707070" text-anchor="end" stroke="#707070" stroke-width="0.1">10</text>
<line x1="260.60" y1="283.06" x2="520.80" y2="283.06" stroke="#d4d4d4" stroke-width="0.8"/>
<text transform="translate(254.20 285.54) scale(0.9 1)" font-size="6.6" fill="#707070" text-anchor="end" stroke="#707070" stroke-width="0.1">20</text>
<line x1="260.60" y1="265.42" x2="520.80" y2="265.42" stroke="#d4d4d4" stroke-width="0.8"/>
<text transform="translate(254.20 267.89) scale(0.9 1)" font-size="6.6" fill="#707070" text-anchor="end" stroke="#707070" stroke-width="0.1">30</text>
<line x1="260.60" y1="247.77" x2="520.80" y2="247.77" stroke="#d4d4d4" stroke-width="0.8"/>
<text transform="translate(254.20 250.25) scale(0.9 1)" font-size="6.6" fill="#707070" text-anchor="end" stroke="#707070" stroke-width="0.1">40</text>
<line x1="260.60" y1="230.13" x2="520.80" y2="230.13" stroke="#d4d4d4" stroke-width="0.8"/>
<text transform="translate(254.20 232.60) scale(0.9 1)" font-size="6.6" fill="#707070" text-anchor="end" stroke="#707070" stroke-width="0.1">50</text>
<line x1="260.60" y1="212.48" x2="520.80" y2="212.48" stroke="#d4d4d4" stroke-width="0.8"/>
<text transform="translate(254.20 214.96) scale(0.9 1)" font-size="6.6" fill="#707070" text-anchor="end" stroke="#707070" stroke-width="0.1">60</text>
<text transform="translate(286.40 330.68) scale(0.9 1)" font-size="6.6" fill="#707070" text-anchor="middle" stroke="#707070" stroke-width="0.1">1</text>
<text transform="translate(338.45 330.68) scale(0.9 1)" font-size="6.6" fill="#707070" text-anchor="middle" stroke="#707070" stroke-width="0.1">2</text>
<text transform="translate(390.50 330.68) scale(0.9 1)" font-size="6.6" fill="#707070" text-anchor="middle" stroke="#707070" stroke-width="0.1">3</text>
<text transform="translate(442.55 330.68) scale(0.9 1)" font-size="6.6" fill="#707070" text-anchor="middle" stroke="#707070" stroke-width="0.1">4</text>
<text transform="translate(494.60 330.68) scale(0.9 1)" font-size="6.6" fill="#707070" text-anchor="middle" stroke="#707070" stroke-width="0.1">5</text>
<polyline points="286.70,230.13 338.75,249.53 390.80,244.24 442.85,258.36 494.90,274.24" fill="none" stroke="#4472c4" stroke-width="2.2" stroke-linejoin="round" stroke-linecap="round"/>
<polyline points="286.70,247.77 338.75,261.89 390.80,251.30 442.85,228.36 494.90,270.71" fill="none" stroke="#ed7d31" stroke-width="2.2" stroke-linejoin="round" stroke-linecap="round"/>
<text x="371.40" y="199.62" font-size="9.5" fill="#5e5e5e" textLength="27.90" lengthAdjust="spacingAndGlyphs" stroke="#5e5e5e" stroke-width="0.1">Graph</text>
<line x1="362.50" y1="344.00" x2="378.80" y2="344.00" stroke="#4472c4" stroke-width="1.9" stroke-linecap="round"/>
<text transform="translate(380.40 346.33) scale(0.85 1)" font-size="6.2" fill="#707070" text-anchor="start" stroke="#707070" stroke-width="0.1">A</text>
<line x1="389.40" y1="344.00" x2="405.10" y2="344.00" stroke="#ed7d31" stroke-width="1.9" stroke-linecap="round"/>
<text transform="translate(406.80 346.33) scale(0.85 1)" font-size="6.2" fill="#707070" text-anchor="start" stroke="#707070" stroke-width="0.1">B</text>
<circle cx="241.80" cy="183.30" r="3.00" fill="#fff" stroke="#787878" stroke-width="1.1"/>
<circle cx="385.70" cy="183.30" r="3.00" fill="#fff" stroke="#787878" stroke-width="1.1"/>
<circle cx="529.60" cy="183.30" r="3.00" fill="#fff" stroke="#787878" stroke-width="1.1"/>
<circle cx="241.80" cy="269.50" r="3.00" fill="#fff" stroke="#787878" stroke-width="1.1"/>
<circle cx="529.60" cy="269.50" r="3.00" fill="#fff" stroke="#787878" stroke-width="1.1"/>
<circle cx="241.80" cy="355.70" r="3.00" fill="#fff" stroke="#787878" stroke-width="1.1"/>
<circle cx="385.70" cy="355.70" r="3.00" fill="#fff" stroke="#787878" stroke-width="1.1"/>
<circle cx="529.60" cy="355.70" r="3.00" fill="#fff" stroke="#787878" stroke-width="1.1"/>
<rect x="536.70" y="182.60" width="16.70" height="16.60" fill="#fdfdfd" stroke="#c8c8c8" stroke-width="0.7"/>
<rect x="536.70" y="205.40" width="16.70" height="16.60" fill="#fdfdfd" stroke="#c8c8c8" stroke-width="0.7"/>
<rect x="536.70" y="228.30" width="16.70" height="16.60" fill="#fdfdfd" stroke="#c8c8c8" stroke-width="0.7"/>
<path d="M545 185v11.8M539.1 190.9h11.8" fill="none" stroke="#31a366" stroke-width="0.75" />
<path d="M550.6 208.2c-2.4 1.6-5.4 4.8-7.2 7.6l1.4 1.2c2.6-2 5.2-5.6 6.400-8.4z" fill="#fff" stroke="#555" stroke-width="0.6" />
<path d="M543.2 216c-1.6-.4-2.6.6-2.8 1.6s-.8 1.400-1.600 1.600c1.8.8 4.6.6 5.6-1.800z" fill="#4a86d8" stroke="#3a66b7" stroke-width="0.4" />
<path d="M538.9 231.2h12.4l-4.8 5.8v6l-2.8-1.4v-4.6z" fill="#fff" stroke="#555" stroke-width="0.8" />
</g>
<g id="scroll">
<rect x="756.00" y="122.20" width="17.00" height="283.60" fill="#e6e6e6"/>
<rect x="757.10" y="122.80" width="9.00" height="8.50" fill="#fff"/>
<path d="M759.7 128.3l1.9-2 1.9 2z" fill="#555" />
<rect x="757.10" y="132.80" width="9.00" height="251.50" fill="#fff" stroke="#d0d0d0" stroke-width="0.5"/>
<rect x="757.10" y="397.10" width="9.00" height="8.70" fill="#fff"/>
<path d="M759.7 400.300l1.900 2 1.900-2z" fill="#555" />
<rect x="-5.00" y="405.80" width="778.00" height="13.20" fill="#e4e4e4"/>
<line x1="0.00" y1="405.80" x2="768.00" y2="405.80" stroke="#cfcfcf" stroke-width="0.7"/>
<line x1="0.00" y1="418.90" x2="768.00" y2="418.90" stroke="#d4d4d4" stroke-width="0.6"/>
<path d="M14 410.400l-1.600 1.800 1.600 1.800" fill="none" stroke="#bdbdbd" stroke-width="0.8" />
<path d="M25.600 410.400l1.600 1.800-1.600 1.800" fill="none" stroke="#bdbdbd" stroke-width="0.8" />
<rect x="47.50" y="405.60" width="32.00" height="11.30" fill="#fff"/>
<line x1="47.50" y1="417.20" x2="79.50" y2="417.20" stroke="#217346" stroke-width="1"/>
<text x="52.20" y="414.61" font-size="7.8" fill="#217346" textLength="22.30" lengthAdjust="spacingAndGlyphs" font-weight="bold" stroke="#217346" stroke-width="0.1">Graph</text>
<circle cx="99.50" cy="412.40" r="4.00" fill="none" stroke="#6a6a6a" stroke-width="0.7"/>
<path d="M97.400 412.400h4.200M99.500 410.300v4.200" fill="none" stroke="#6a6a6a" stroke-width="0.7" />
<circle cx="459.70" cy="409.80" r="0.45" fill="#9a9a9a"/>
<circle cx="459.70" cy="412.30" r="0.45" fill="#9a9a9a"/>
<circle cx="459.70" cy="414.80" r="0.45" fill="#9a9a9a"/>
<rect x="468.00" y="407.60" width="8.80" height="9.30" fill="#fff"/>
<path d="M473.400 410.200l-2.200 2 2.200 2z" fill="#444" />
<rect x="478.30" y="407.60" width="253.00" height="9.30" fill="#fff"/>
<rect x="747.00" y="407.80" width="9.10" height="9.00" fill="#fff"/>
<path d="M750.600 410.200l2.200 2.100-2.200 2.100z" fill="#444" />
</g>
<g id="status">
<rect x="-5.00" y="419.20" width="778.00" height="18.80" fill="#f3f2f1"/>
<text x="3.70" y="428.38" font-size="6.6" fill="#555" textLength="16.30" lengthAdjust="spacingAndGlyphs" stroke="#555" stroke-width="0.1">Ready</text>
<rect x="614.90" y="419.60" width="16.80" height="12.60" fill="#c8c6c4"/>
<rect x="619.30" y="422.40" width="8.00" height="7.60" fill="none" stroke="#6a6a6a" stroke-width="0.7"/>
<line x1="621.97" y1="422.40" x2="621.97" y2="430.00" stroke="#6a6a6a" stroke-width="0.5"/>
<line x1="619.30" y1="424.93" x2="627.30" y2="424.93" stroke="#6a6a6a" stroke-width="0.5"/>
<line x1="624.63" y1="422.40" x2="624.63" y2="430.00" stroke="#6a6a6a" stroke-width="0.5"/>
<line x1="619.30" y1="427.47" x2="627.30" y2="427.47" stroke="#6a6a6a" stroke-width="0.5"/>
<rect x="637.30" y="422.40" width="8.20" height="7.60" fill="none" stroke="#8a8886" stroke-width="0.7"/>
<line x1="639.80" y1="422.40" x2="639.80" y2="430.00" stroke="#8a8886" stroke-width="0.5"/>
<line x1="643.00" y1="422.40" x2="643.00" y2="430.00" stroke="#8a8886" stroke-width="0.5"/>
<rect x="654.80" y="422.40" width="8.40" height="7.60" fill="none" stroke="#8a8886" stroke-width="0.7"/>
<path d="M657.600 422.400v3.800h5.600M660.400 422.400v3.800" fill="none" stroke="#8a8886" stroke-width="0.5" />
<line x1="671.40" y1="426.20" x2="675.20" y2="426.20" stroke="#555" stroke-width="0.9"/>
<line x1="677.70" y1="426.20" x2="736.70" y2="426.20" stroke="#a8a6a4" stroke-width="0.6"/>
<rect x="705.40" y="422.60" width="2.90" height="7.40" fill="#605e5c"/>
<path d="M739.200 426.200h4M741.200 424.200v4" fill="none" stroke="#555" stroke-width="0.9" />
<text x="749.40" y="428.30" font-size="6.4" fill="#555" textLength="15.10" lengthAdjust="spacingAndGlyphs" stroke="#555" stroke-width="0.1">100%</text>
<rect x="-5.00" y="432.30" width="778.00" height="5.70" fill="#9a9a9a"/>
<rect x="-5.00" y="432.20" width="34.00" height="5.80" fill="#333"/>
<rect x="235.00" y="432.20" width="538.00" height="5.80" fill="#4a4a4a"/>
</g>
</svg>
</body></html>
